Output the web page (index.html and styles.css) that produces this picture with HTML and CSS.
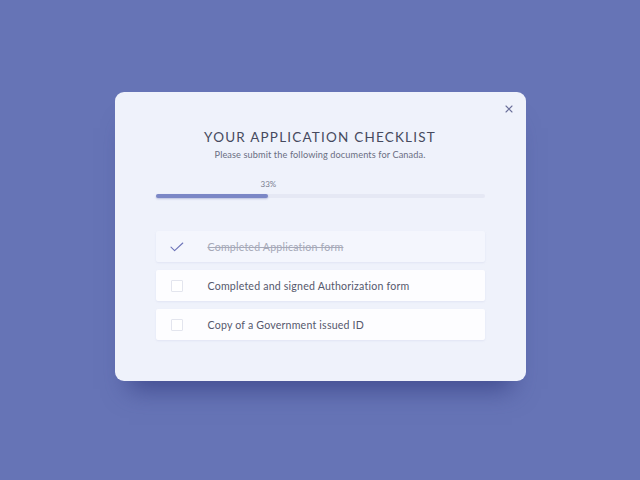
FILE: index.html
```html
<!DOCTYPE html>
<html lang="en">
<head>
<meta charset="utf-8">
<title>Your Application Checklist</title>
<link rel="stylesheet" href="styles.css">
</head>
<body>
<main class="stage">
  <section class="card">
    <button class="close" aria-label="Close">
      <svg width="8" height="8" viewBox="0 0 8 8"><path d="M1 1L7 7M7 1L1 7" stroke="#6a6f9a" stroke-width="1.1" stroke-linecap="round"/></svg>
    </button>
    <h1 class="title">YOUR APPLICATION CHECKLIST</h1>
    <p class="subtitle">Please submit the following documents for Canada.</p>
    <div class="progress">
      <div class="progress-label-row">
        <span class="progress-spacer" style="width:34.3%"></span>
        <span class="progress-label">33%</span>
      </div>
      <div class="track"><div class="fill" style="width:34.3%"></div></div>
    </div>
    <ul class="list">
      <li class="item done">
        <span class="check">
          <svg width="14" height="10" viewBox="0 0 14 10"><path d="M1 5.2L4.6 8.6L12.8 1" fill="none" stroke="#6c73b8" stroke-width="1.1" stroke-linecap="round" stroke-linejoin="round"/></svg>
        </span>
        <span class="label">Completed Application form</span>
      </li>
      <li class="item">
        <span class="check"><span class="box"></span></span>
        <span class="label">Completed and signed Authorization form</span>
      </li>
      <li class="item">
        <span class="check"><span class="box"></span></span>
        <span class="label">Copy of a Government issued ID</span>
      </li>
    </ul>
  </section>
</main>
</body>
</html>
```

FILE: styles.css
```css
* { box-sizing: border-box; }

html, body {
  margin: 0;
  height: 100%;
}

body {
  background: #6674b6;
  font-family: Lato, "Noto Sans", sans-serif;
  font-weight: 300;
  color: #4a4e63;
}

.stage {
  display: flex;
  justify-content: center;
  padding-top: 92px;
}

.card {
  position: relative;
  width: 411px;
  height: 289px;
  background: #eff2fb;
  border-radius: 9px;
  padding: 36px 41px 0;
  box-shadow: 0 22px 24px -14px rgba(52, 62, 130, 0.75);
}

.close {
  position: absolute;
  top: 12px;
  right: 12px;
  width: 10px;
  height: 10px;
  padding: 0;
  border: 0;
  background: none;
  display: flex;
  align-items: center;
  justify-content: center;
}

.title {
  margin: 0;
  text-align: center;
  font-size: 13.5px;
  line-height: 18px;
  font-weight: 400;
  letter-spacing: 1.2px;
  color: #464a5e;
}

.subtitle {
  margin: 3px 0 0;
  text-align: center;
  font-size: 9.2px;
  line-height: 12px;
  font-weight: 400;
  letter-spacing: 0.1px;
  color: #6a6e82;
}

.progress {
  margin-top: 18px;
}

/* the percentage sits centred over the end of the filled bar */
.progress-label-row {
  display: flex;
  height: 11px;
}

.progress-spacer {
  flex: none;
}

.progress-label {
  width: 0;
  display: flex;
  justify-content: center;
  font-size: 8px;
  line-height: 11px;
  font-weight: 400;
  color: #7a7e90;
  white-space: nowrap;
}

.track {
  margin-top: 4px;
  height: 4px;
  border-radius: 2px;
  background: #e5e8f4;
}

.fill {
  height: 4px;
  border-radius: 2px;
  background: #7b87c6;
  box-shadow: 0 1px 2px rgba(90, 100, 170, 0.35);
}

.list {
  list-style: none;
  margin: 33px 0 0;
  padding: 0;
  display: flex;
  flex-direction: column;
  gap: 8px;
}

.item {
  height: 31px;
  display: flex;
  align-items: center;
  background: #fdfdff;
  border-radius: 2px;
  box-shadow: 0 1px 2px rgba(160, 170, 210, 0.18);
}

.item.done {
  background: #f4f6fd;
}

.check {
  width: 52px;
  padding-left: 14px;
  display: flex;
  align-items: center;
}

.box {
  width: 12px;
  height: 12px;
  margin-left: 1px;
  border: 1px solid #e3e5ee;
  border-radius: 1px;
  background: #fff;
}

.label {
  font-size: 10.6px;
  font-weight: 400;
  letter-spacing: 0.2px;
  color: #55586c;
}

.done .label {
  color: #a6a9b8;
  text-decoration: line-through;
  text-decoration-color: #a6a9b8;
}
```
